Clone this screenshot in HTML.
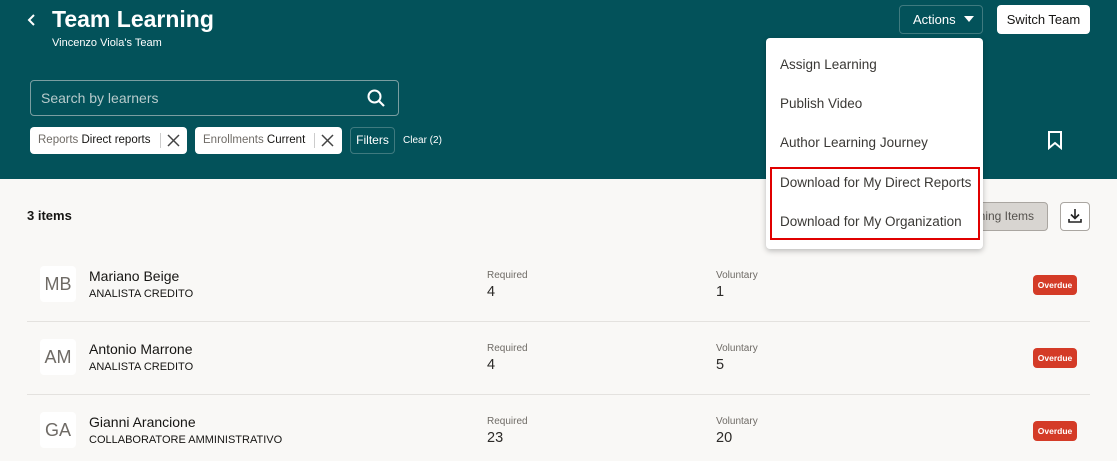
<!DOCTYPE html>
<html><head><style>
*{box-sizing:border-box;margin:0;padding:0}
body{width:1117px;height:461px;overflow:hidden;background:#f9f8f6;font-family:"Liberation Sans",sans-serif;position:relative;color:#161513}
.hdr{position:absolute;left:0;top:0;width:1117px;height:179px;background:#03525a}
.a{position:absolute;white-space:nowrap}
.chip{position:absolute;top:127px;height:27px;background:#fff;border-radius:4px;font-size:11.5px;line-height:27px;padding-left:8px;color:#6f6b66;white-space:nowrap}
.chip b{color:#161513;font-weight:normal}
.chip .sep{position:absolute;top:6px;width:1px;height:15px;background:#ccc}
.x{position:absolute;top:0}
.menu{position:absolute;left:766px;top:38px;width:217px;height:211px;background:#fff;border-radius:4px;box-shadow:0 2px 6px rgba(0,0,0,.25)}
.menu div{position:absolute;left:14px;font-size:13.5px;color:#3a3835;white-space:nowrap}
.av{position:absolute;left:40px;width:36px;height:36px;background:#fff;border-radius:4px;font-size:18px;color:#6f6b66;text-align:center;line-height:36px}
.nm{position:absolute;left:89px;font-size:14px;white-space:nowrap}
.jb{position:absolute;left:89px;font-size:11px;white-space:nowrap}
.lb{position:absolute;font-size:10px;color:#6f6b66}
.vl{position:absolute;font-size:14.5px;color:#2c2a28}
.od{position:absolute;left:1033px;width:44px;height:20px;background:#d43b27;border-radius:4px;color:#fff;font-size:8.5px;font-weight:bold;text-align:center;line-height:20px}
.ln{position:absolute;left:27px;width:1063px;height:1px;background:#e4e2df}
</style></head><body>
<div class="hdr"></div>
<svg class="a" style="left:26px;top:13px" width="12" height="14"><path d="M8 2L3 7L8 12" stroke="#fff" stroke-width="2" fill="none"/></svg>
<div class="a" style="left:52px;top:6px;font-size:23px;font-weight:bold;color:#fff">Team Learning</div>
<div class="a" style="left:52px;top:37px;font-size:11px;color:#fff">Vincenzo Viola's Team</div>
<div class="a" style="left:30px;top:80px;width:369px;height:36px;border:1px solid #7a9ea1;border-radius:4px"></div>
<div class="a" style="left:41px;top:90px;font-size:14px;color:#b8cbcc">Search by learners</div>
<svg class="a" style="left:366px;top:88px" width="20" height="20"><circle cx="8.5" cy="8.5" r="6" stroke="#fff" stroke-width="2" fill="none"/><path d="M13 13L18 18" stroke="#fff" stroke-width="2.2"/></svg>
<div class="chip" style="left:30px;width:157px">Reports <b>Direct reports</b><span class="sep" style="left:130px"></span><svg class="x" style="left:137px;top:7px" width="13" height="13"><path d="M1 1L12 12M12 1L1 12" stroke="#444" stroke-width="1.5"/></svg></div>
<div class="chip" style="left:195px;width:147px">Enrollments <b>Current</b><span class="sep" style="left:119px"></span><svg class="x" style="left:126px;top:7px" width="13" height="13"><path d="M1 1L12 12M12 1L1 12" stroke="#444" stroke-width="1.5"/></svg></div>
<div class="a" style="left:350px;top:127px;width:45px;height:27px;border:1px solid #3f7a7f;border-radius:4px;color:#fff;font-size:12px;line-height:25px;text-align:center">Filters</div>
<div class="a" style="left:403px;top:135px;font-size:10px;color:#fff">Clear (2)</div>
<div class="a" style="left:899px;top:5px;width:84px;height:29px;border:1px solid #3f7a7f;border-radius:4px;color:#fff;font-size:13px;line-height:27px;padding-left:13px">Actions <span style="position:absolute;left:64px;top:10px;border-left:5px solid transparent;border-right:5px solid transparent;border-top:6px solid #fff"></span></div>
<div class="a" style="left:997px;top:5px;width:93px;height:29px;background:#fff;border-radius:4px;font-size:13px;line-height:29px;text-align:center">Switch Team</div>
<svg class="a" style="left:1047px;top:131px" width="16" height="19"><path d="M2 1H14V17L8 12L2 17Z" stroke="#fff" stroke-width="2" fill="none"/></svg>
<div class="a" style="left:27px;top:208px;font-size:13px;font-weight:bold">3 items</div>
<div class="a" style="left:960px;top:202px;width:88px;height:29px;background:#d8d5d1;border:1px solid #aaa6a1;border-radius:4px;font-size:12px;line-height:27px;text-align:right;padding-right:13px;color:#55524e">ning Items</div>
<div class="a" style="left:1060px;top:202px;width:30px;height:29px;background:#fff;border:1px solid #aaa6a1;border-radius:4px"></div>
<svg class="a" style="left:1066px;top:207px" width="18" height="18"><path d="M9 2V11M5 7.5L9 11.5L13 7.5M3 12V15H15V12" stroke="#222" stroke-width="1.6" fill="none"/></svg>
<div class="menu">
<div style="top:19px">Assign Learning</div>
<div style="top:58px">Publish Video</div>
<div style="top:97px">Author Learning Journey</div>
<div style="top:137px">Download for My Direct Reports</div>
<div style="top:176px">Download for My Organization</div>
</div>
<div class="a" style="left:770px;top:167px;width:210px;height:73px;border:2px solid #e00000"></div>

<div class="av" style="top:266px">MB</div>
<div class="nm" style="top:268px">Mariano Beige</div>
<div class="jb" style="top:288px">ANALISTA CREDITO</div>
<div class="lb" style="left:487px;top:270px">Required</div><div class="vl" style="left:487px;top:284px">4</div>
<div class="lb" style="left:716px;top:270px">Voluntary</div><div class="vl" style="left:716px;top:284px">1</div>
<div class="od" style="top:275px">Overdue</div>
<div class="ln" style="top:321px"></div>

<div class="av" style="top:339px">AM</div>
<div class="nm" style="top:341px">Antonio Marrone</div>
<div class="jb" style="top:361px">ANALISTA CREDITO</div>
<div class="lb" style="left:487px;top:343px">Required</div><div class="vl" style="left:487px;top:357px">4</div>
<div class="lb" style="left:716px;top:343px">Voluntary</div><div class="vl" style="left:716px;top:357px">5</div>
<div class="od" style="top:348px">Overdue</div>
<div class="ln" style="top:394px"></div>

<div class="av" style="top:412px">GA</div>
<div class="nm" style="top:414px">Gianni Arancione</div>
<div class="jb" style="top:434px">COLLABORATORE AMMINISTRATIVO</div>
<div class="lb" style="left:487px;top:416px">Required</div><div class="vl" style="left:487px;top:430px">23</div>
<div class="lb" style="left:716px;top:416px">Voluntary</div><div class="vl" style="left:716px;top:430px">20</div>
<div class="od" style="top:421px">Overdue</div>
</body></html>
